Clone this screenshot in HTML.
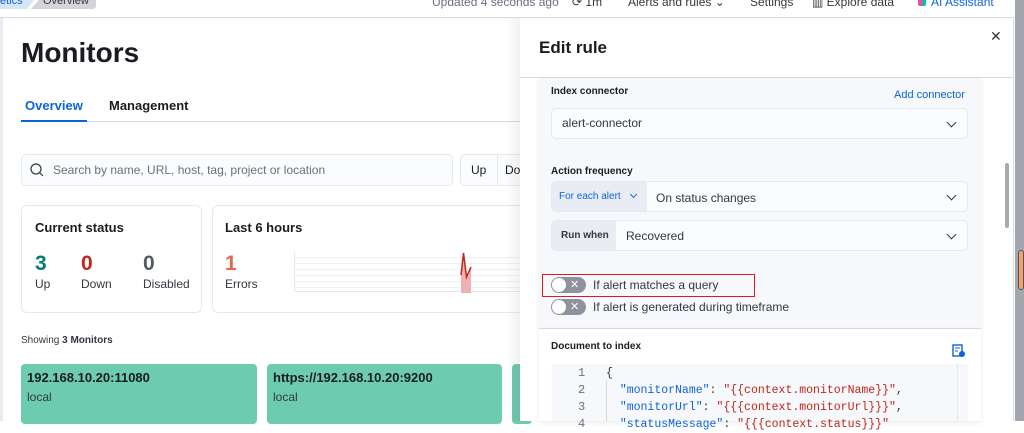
<!DOCTYPE html>
<html><head><meta charset="utf-8"><style>
*{box-sizing:border-box;margin:0;padding:0}
body{width:1024px;height:421px;overflow:hidden;position:relative;background:#fff;font-family:"Liberation Sans",sans-serif;color:#1a1c21}
.a{position:absolute;white-space:nowrap}
.card{position:absolute;border:1px solid #e3e8f2;border-radius:6px;background:#fff}
.sel{position:absolute;background:#fbfcfd;border:1px solid #e3e8f2;border-radius:5px;height:31px}
.chev{position:absolute;width:7px;height:7px;border-right:1.5px solid #343741;border-bottom:1.5px solid #343741;transform:rotate(45deg)}
.tog{position:absolute;width:35px;height:16px;border-radius:8px;background:#8e929c}
.tog:before{content:"";position:absolute;left:1px;top:1px;width:14px;height:14px;border-radius:50%;background:#fff}
.tog:after{content:"✕";position:absolute;left:19px;top:0;font-size:11px;color:#fff;line-height:16px}
.mono{font-family:"Liberation Mono",monospace;font-size:11px}
</style></head><body>
<div class="a" style="left:0;top:18px;width:3px;height:403px;background:#e9ebf0"></div>
<div class="a" style="left:0;top:0;width:1014px;height:18px;background:#fff;border-bottom:1px solid #d3dae6"></div>
<div class="a" style="left:0;top:0;width:34px;height:9px;background:#d6e6f7;clip-path:polygon(0 0,100% 0,80% 100%,0 100%)"></div>
<div class="a" style="left:0;top:-5px;font-size:11px;color:#0b64dd">etics</div>
<div class="a" style="left:31px;top:0;width:65px;height:9px;background:#d3d5d9;clip-path:polygon(12% 0,100% 0,100% 100%,0 100%);border-radius:0 0 3px 0"></div>
<div class="a" style="left:43px;top:-5px;font-size:11px;color:#343741">Overview</div>
<div class="a" style="left:432px;top:-5px;font-size:12px;color:#69707d">Updated 4 seconds ago</div>
<div class="a" style="left:572px;top:-5px;font-size:12px;color:#343741">⟳ 1m</div>
<div class="a" style="left:628px;top:-5px;font-size:12px;color:#343741">Alerts and rules ⌄</div>
<div class="a" style="left:750px;top:-5px;font-size:12px;color:#343741">Settings</div>
<div class="a" style="left:812px;top:-5px;font-size:12px;color:#343741">▥ Explore data</div>
<div class="a" style="left:918px;top:-3px;width:8px;height:9px;background:linear-gradient(90deg,#f04e98 50%,#00bfb3 50%);border-radius:2px"></div>
<div class="a" style="left:931px;top:-5px;font-size:12px;color:#0b64dd">AI Assistant</div>

<div class="a" style="left:21px;top:37px;font-size:28px;font-weight:bold;color:#1a1c21">Monitors</div>
<div class="a" style="left:25px;top:98px;font-size:13px;font-weight:bold;color:#0b64dd">Overview</div>
<div class="a" style="left:109px;top:98px;font-size:13px;font-weight:bold">Management</div>
<div class="a" style="left:21px;top:121px;width:500px;height:1px;background:#d3dae6"></div>
<div class="a" style="left:21px;top:120px;width:66px;height:2px;background:#0b64dd"></div>
<div class="a" style="left:21px;top:154px;width:432px;height:32px;background:#fbfcfd;border:1px solid #e3e8f2;border-radius:5px"></div>
<svg class="a" style="left:30px;top:163px" width="14" height="14"><circle cx="6" cy="6" r="5" fill="none" stroke="#343741" stroke-width="1.2"/><line x1="9.5" y1="9.5" x2="13" y2="13" stroke="#343741" stroke-width="1.2"/></svg>
<div class="a" style="left:53px;top:163px;font-size:12px;color:#69707d">Search by name, URL, host, tag, project or location</div>
<div class="a" style="left:460px;top:154px;width:70px;height:32px;background:#fbfcfd;border:1px solid #e3e8f2;border-radius:5px"></div>
<div class="a" style="left:497px;top:155px;width:1px;height:30px;background:#e3e8f2"></div>
<div class="a" style="left:471px;top:163px;font-size:12px">Up</div>
<div class="a" style="left:505px;top:163px;font-size:12px">Do</div>

<div class="card" style="left:21px;top:205px;width:181px;height:108px"></div>
<div class="a" style="left:35px;top:220px;font-size:13px;font-weight:bold">Current status</div>
<div class="a" style="left:35px;top:252px;font-size:21px;font-weight:bold;color:#017d73">3</div>
<div class="a" style="left:81px;top:252px;font-size:21px;font-weight:bold;color:#bd271e">0</div>
<div class="a" style="left:143px;top:252px;font-size:21px;font-weight:bold;color:#535966">0</div>
<div class="a" style="left:35px;top:277px;font-size:12px;color:#343741">Up</div>
<div class="a" style="left:81px;top:277px;font-size:12px;color:#343741">Down</div>
<div class="a" style="left:143px;top:277px;font-size:12px;color:#343741">Disabled</div>

<div class="card" style="left:212px;top:205px;width:330px;height:108px"></div>
<div class="a" style="left:225px;top:220px;font-size:13px;font-weight:bold">Last 6 hours</div>
<div class="a" style="left:225px;top:252px;font-size:21px;font-weight:bold;color:#e7664c">1</div>
<div class="a" style="left:225px;top:277px;font-size:12px;color:#343741">Errors</div>
<div class="a" style="left:294px;top:252px;width:230px;height:40px;background:repeating-linear-gradient(180deg,#fff 0 5px,#f0f1f4 5px 6px);border-left:1px solid #e6e8ec;border-bottom:1px solid #e6e8ec"></div>
<svg class="a" style="left:458px;top:250px" width="16" height="43"><path d="M3 43V25L5.5 3L8.5 27L13 17V43Z" fill="#edb2b0"/><path d="M3 25L5.5 3L8.5 27L13 17" fill="none" stroke="#bd271e" stroke-width="1.5"/></svg>

<div class="a" style="left:21px;top:335px;font-size:10px;color:#343741">Showing <b>3 Monitors</b></div>
<div class="a" style="left:21px;top:364px;width:236px;height:60px;background:#6dcbb0;border-radius:4px"></div>
<div class="a" style="left:267px;top:364px;width:235px;height:60px;background:#6dcbb0;border-radius:4px"></div>
<div class="a" style="left:512px;top:364px;width:20px;height:60px;background:#6dcbb0;border-radius:4px"></div>
<div class="a" style="left:27px;top:370px;font-size:13px;font-weight:bold;color:#1a1c21">192.168.10.20:11080</div>
<div class="a" style="left:27px;top:390px;font-size:12px;color:#343741">local</div>
<div class="a" style="left:273px;top:370px;font-size:13px;font-weight:bold;color:#1a1c21">https://192.168.10.20:9200</div>
<div class="a" style="left:273px;top:390px;font-size:12px;color:#343741">local</div>

<div class="a" style="left:505px;top:18px;width:16px;height:403px;background:linear-gradient(90deg,rgba(0,0,0,0),rgba(0,0,0,0.06))"></div>
<div class="a" style="left:520px;top:18px;width:494px;height:403px;background:#fff"></div>
<div class="a" style="left:520px;top:77px;width:494px;height:1px;background:#d3dae6"></div>
<div class="a" style="left:539px;top:38px;font-size:17px;font-weight:bold">Edit rule</div>
<div class="a" style="left:990px;top:28px;font-size:14px;color:#343741">✕</div>
<div class="a" style="left:1013px;top:18px;width:1px;height:403px;background:#d3dae6"></div>
<div class="a" style="left:1015px;top:0;width:9px;height:421px;background:#a4a6ad"></div>
<div class="a" style="left:1018px;top:250px;width:6px;height:40px;background:#f0a36a;border:1px solid #555;border-radius:3px"></div>

<div class="a" style="left:539px;top:78px;width:442px;height:250px;background:#f7f8fc;box-shadow:0 2px 5px rgba(0,0,0,0.08)"></div>
<div class="a" style="left:539px;top:328px;width:442px;height:93px;background:#fff;border-top:1px solid #d3dae6;box-shadow:0 2px 5px rgba(0,0,0,0.08)"></div>
<div class="a" style="left:1005px;top:163px;width:4px;height:65px;background:#a9aab0;border-radius:2px"></div>

<div class="a" style="left:551px;top:86px;font-size:10px;font-weight:bold;color:#1a1c21">Index connector</div>
<div class="a" style="left:894px;top:89px;font-size:11px;color:#0b64dd">Add connector</div>
<div class="sel" style="left:551px;top:108px;width:417px"></div>
<div class="a" style="left:562px;top:116px;font-size:12px;color:#343741">alert-connector</div>
<div class="chev" style="left:948px;top:119px"></div>

<div class="a" style="left:551px;top:166px;font-size:10px;font-weight:bold">Action frequency</div>
<div class="sel" style="left:551px;top:181px;width:417px"></div>
<div class="a" style="left:552px;top:182px;width:95px;height:29px;background:#e9edf3;border-radius:4px 0 0 4px"></div>
<div class="a" style="left:559px;top:191px;font-size:10px;color:#0b64dd">For each alert</div>
<div class="chev" style="left:631px;top:192px;width:5px;height:5px;border-color:#0b64dd"></div>
<div class="a" style="left:656px;top:191px;font-size:12px;color:#343741">On status changes</div>
<div class="chev" style="left:948px;top:192px"></div>

<div class="sel" style="left:551px;top:220px;width:417px"></div>
<div class="a" style="left:552px;top:221px;width:64px;height:29px;background:#e9edf3;border-radius:4px 0 0 4px"></div>
<div class="a" style="left:561px;top:230px;font-size:10px;font-weight:bold;color:#343741">Run when</div>
<div class="a" style="left:626px;top:229px;font-size:12px;color:#343741">Recovered</div>
<div class="chev" style="left:948px;top:231px"></div>

<div class="a" style="left:542px;top:274px;width:213px;height:23px;border:1.5px solid #e0191b"></div>
<div class="tog" style="left:551px;top:277px"></div>
<div class="a" style="left:593px;top:278px;font-size:12px;color:#343741">If alert matches a query</div>
<div class="tog" style="left:551px;top:299px"></div>
<div class="a" style="left:593px;top:300px;font-size:12px;color:#343741">If alert is generated during timeframe</div>

<div class="a" style="left:551px;top:341px;font-size:10px;font-weight:bold">Document to index</div>
<svg class="a" style="left:952px;top:344px" width="13" height="13"><rect x="1" y="1" width="9" height="11" fill="none" stroke="#0b64dd" stroke-width="1.4"/><line x1="3" y1="4" x2="8" y2="4" stroke="#0b64dd"/><line x1="3" y1="7" x2="6" y2="7" stroke="#0b64dd"/><circle cx="10" cy="10" r="3" fill="#0b64dd"/></svg>
<div class="a" style="left:552px;top:364px;width:416px;height:57px;background:#f7f8fc"></div>
<div class="a" style="left:957px;top:364px;width:1px;height:57px;background:#e3e8f2"></div>
<div class="a" style="left:606px;top:380px;width:1px;height:41px;background:#d3dae6"></div>
<div class="a mono" style="left:578px;top:365px;line-height:17px;font-size:12px;color:#69707d">1<br>2<br>3<br>4</div>
<div class="a mono" style="left:606px;top:365px;line-height:17px;font-size:11.5px;color:#343741">{<br>&nbsp;&nbsp;<span style="color:#0b64dd">"monitorName"</span>: <span style="color:#bd271e">"{{context.monitorName}}"</span>,<br>&nbsp;&nbsp;<span style="color:#0b64dd">"monitorUrl"</span>: <span style="color:#bd271e">"{{{context.monitorUrl}}}"</span>,<br>&nbsp;&nbsp;<span style="color:#0b64dd">"statusMessage"</span>: <span style="color:#bd271e">"{{{context.status}}}"</span></div>
</body></html>
